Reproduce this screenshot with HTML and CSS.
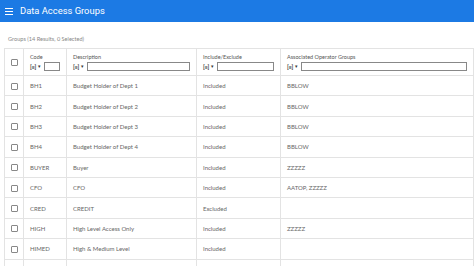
FILE: index.html
```html
<!DOCTYPE html>
<html>
<head>
<meta charset="utf-8">
<link rel="stylesheet" href="styles.css">
</head>
<body>
<header class="appbar">
  <svg class="menu" width="8" height="7" viewBox="0 0 8 7"><rect y="0" width="8" height="1" fill="#fff"/><rect y="3" width="8" height="1" fill="#fff"/><rect y="6" width="8" height="1" fill="#fff"/></svg>
  <span class="title">Data Access Groups</span>
</header>
<div class="summary">Groups (14 Results, 0 Selected)</div>
<table class="grid">
  <colgroup>
    <col class="c-check"><col class="c-code"><col class="c-desc"><col class="c-inc"><col class="c-assoc">
  </colgroup>
  <thead>
    <tr>
      <th class="chk"><span class="box"></span></th>
      <th><div class="lbl">Code</div><div class="flt"><span class="op">[≡]</span><span class="caret">▾</span><span class="inp"></span></div></th>
      <th><div class="lbl">Description</div><div class="flt"><span class="op">[≡]</span><span class="caret">▾</span><span class="inp"></span></div></th>
      <th><div class="lbl">Include/Exclude</div><div class="flt"><span class="op">[≡]</span><span class="caret">▾</span><span class="inp"></span></div></th>
      <th><div class="lbl">Associated Operator Groups</div><div class="flt"><span class="op">[≡]</span><span class="caret">▾</span><span class="inp"></span></div></th>
    </tr>
  </thead>
  <tbody>
    <tr><td class="chk"><span class="box"></span></td><td>BH1</td><td>Budget Holder of Dept 1</td><td>Included</td><td>BBLOW</td></tr>
    <tr><td class="chk"><span class="box"></span></td><td>BH2</td><td>Budget Holder of Dept 2</td><td>Included</td><td>BBLOW</td></tr>
    <tr><td class="chk"><span class="box"></span></td><td>BH3</td><td>Budget Holder of Dept 3</td><td>Included</td><td>BBLOW</td></tr>
    <tr><td class="chk"><span class="box"></span></td><td>BH4</td><td>Budget Holder of Dept 4</td><td>Included</td><td>BBLOW</td></tr>
    <tr><td class="chk"><span class="box"></span></td><td>BUYER</td><td>Buyer</td><td>Included</td><td>ZZZZZ</td></tr>
    <tr><td class="chk"><span class="box"></span></td><td>CFO</td><td>CFO</td><td>Included</td><td>AATOP, ZZZZZ</td></tr>
    <tr><td class="chk"><span class="box"></span></td><td>CRED</td><td>CREDIT</td><td>Excluded</td><td></td></tr>
    <tr><td class="chk"><span class="box"></span></td><td>HIGH</td><td>High Level Access Only</td><td>Included</td><td>ZZZZZ</td></tr>
    <tr><td class="chk"><span class="box"></span></td><td>HIMED</td><td>High &amp; Medium Level</td><td>Included</td><td></td></tr>
    <tr><td class="chk"></td><td></td><td></td><td></td><td></td></tr>
  </tbody>
</table>
</body>
</html>
```
FILE: styles.css
```css
html, body {
  margin: 0;
  padding: 0;
  background: #fff;
  overflow: hidden;
  width: 474px;
  height: 266px;
}
body {
  font-family: "Lato", "Liberation Sans", sans-serif;
  color: #555;
}
.appbar {
  height: 22px;
  background: #1c7ae4;
  display: flex;
  align-items: center;
  padding-left: 5px;
  box-sizing: border-box;
}
.menu { margin-right: 7px; }
.title {
  font-family: "Roboto", sans-serif;
  color: #fff;
  font-size: 9.4px;
  line-height: 1;
}
.summary {
  font-size: 5.6px;
  color: #888;
  padding: 14px 0 0 8px;
  height: 12px;
  line-height: 6px;
}
.grid {
  margin-left: 4px;
  border-collapse: collapse;
  table-layout: fixed;
  width: 469px;
}
.c-check { width: 19px; }
.c-code { width: 43px; }
.c-desc { width: 130px; }
.c-inc { width: 84px; }
.c-assoc { width: 193px; }
.grid th, .grid td {
  border: 1px solid #e3e3e3;
  text-align: left;
  padding: 0 0 0 6px;
  font-size: 6px;
  white-space: nowrap;
  overflow: hidden;
  vertical-align: middle;
}
.grid th {
  height: 26px;
  font-weight: normal;
  color: #555;
  background: #fff;
  padding-right: 6px;
}
.grid td { height: 19.4px; color: #666; }
.grid .chk { padding: 0; text-align: center; }
.box {
  display: inline-block;
  width: 5px;
  height: 5px;
  border: 1px solid #888;
  border-radius: 1px;
  vertical-align: middle;
}
.lbl {
  font-size: 5.5px;
  line-height: 7px;
  margin-bottom: 1px;
}
.flt {
  display: flex;
  align-items: center;
  height: 9px;
}
.op {
  font-size: 5.6px;
  font-weight: bold;
  color: #333;
  letter-spacing: -0.2px;
}
.caret {
  font-size: 5px;
  color: #333;
  margin: 0 3px 0 1.5px;
}
.inp {
  flex: 1;
  height: 7px;
  border: 1px solid #888;
  background: #fff;
}
```
